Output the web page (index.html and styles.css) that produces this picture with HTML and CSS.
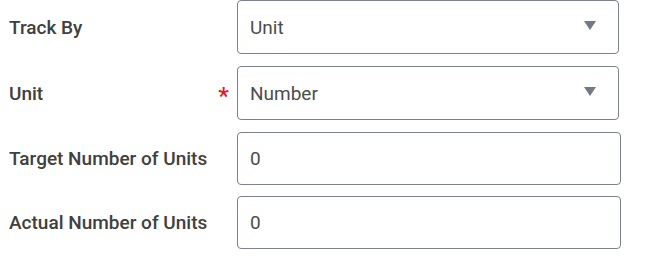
FILE: index.html
```html
<!DOCTYPE html>
<html lang="en">
<head>
  <meta charset="UTF-8">
  <title>Track By</title>
  <link rel="stylesheet" href="styles.css">
</head>
<body>
  <form class="field-list">
    <div class="field-row">
      <label class="field-label">Track By</label>
      <div class="select-box">
        <span class="value">Unit</span>
        <span class="caret"></span>
      </div>
    </div>

    <div class="field-row">
      <label class="field-label">Unit <span class="required">*</span></label>
      <div class="select-box">
        <span class="value">Number</span>
        <span class="caret"></span>
      </div>
    </div>

    <div class="field-row short">
      <label class="field-label">Target Number of Units</label>
      <div class="text-box"><span class="value">0</span></div>
    </div>

    <div class="field-row short">
      <label class="field-label">Actual Number of Units</label>
      <div class="text-box"><span class="value">0</span></div>
    </div>
  </form>
</body>
</html>
```

FILE: styles.css
```css
body {
  margin: 0;
  background-color: #fff;
  font-family: Roboto, "Liberation Sans", Arial, sans-serif;
  color: #404040;
}
.field-list {
  display: flex;
  flex-direction: column;
  gap: 12px;
  padding-left: 9px;
}
.field-row {
  display: flex;
  align-items: center;
  height: 54px;
}
.field-row.short {
  height: 53px;
}
.field-row.short + .field-row.short {
  margin-top: -1px;
}
.field-label {
  width: 220px;
  flex-shrink: 0;
  display: flex;
  justify-content: space-between;
  align-items: center;
  font-size: 19px;
  font-weight: 500;
  color: #404040;
  padding-right: 8px;
}
.required {
  color: #f0141e;
  font-size: 24px;
  font-weight: 500;
  line-height: 1;
  margin-top: 6px;
}
.select-box,
.text-box {
  box-sizing: border-box;
  height: 100%;
  border: 1px solid #7b838e;
  border-radius: 4px;
  display: flex;
  align-items: center;
  padding: 0 12px;
  font-size: 19px;
  color: #4d4d4d;
}
.select-box {
  width: 382px;
  justify-content: space-between;
  padding-right: 22px;
}
.text-box {
  width: 384px;
}
.caret {
  width: 0;
  height: 0;
  border-left: 6px solid transparent;
  border-right: 6px solid transparent;
  border-top: 9px solid #707985;
  margin-top: -3px;
}
```
